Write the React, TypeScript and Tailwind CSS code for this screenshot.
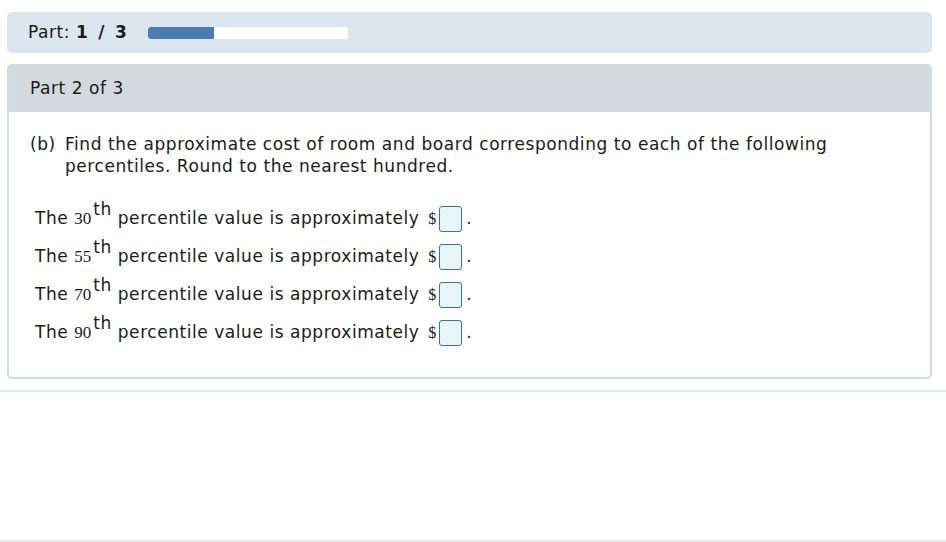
import React from "react";

const rows = ["30", "55", "70", "90"];

export default function App() {
  return (
    <div className="w-[946px] h-[542px] bg-white text-[17px] tracking-[0.55px] text-[#1a1a1a] overflow-hidden" style={{ fontFamily: '"DejaVu Sans", Verdana, sans-serif' }}>
      <div className="pt-[12px] pl-[7px] w-[932px]">
        <div className="h-[41px] bg-[#dce6ef] rounded-[5px] flex items-center pl-[21px]">
          <span>Part: <b className="tracking-[2.3px]">1 / 3</b></span>
          <div className="ml-[19px] w-[200px] h-[12px] bg-white rounded-[3px] overflow-hidden">
            <div className="w-[66px] h-full bg-[#4a7db4]"></div>
          </div>
        </div>
        <div className="mt-[11px] h-[315px] border-2 border-[#d3dbde] rounded-[5px] overflow-hidden">
          <div className="h-[46px] bg-[#d2dadd] flex items-center pl-[21px]">Part 2 of 3</div>
          <div className="pl-[21px] pt-[21px]">
            <div className="flex leading-[22px]">
              <span className="w-[35px] shrink-0">(b)</span>
              <span className="max-w-[795px]">Find the approximate cost of room and board corresponding to each of the following percentiles. Round to the nearest hundred.</span>
            </div>
            <div className="mt-[29px] pl-[5px] flex flex-col gap-[12px]">
              {rows.map((r) => (
                <div key={r} className="flex items-center h-[26px]">
                  <span>The&nbsp;</span>
                  <span className="text-[17px] tracking-normal" style={{ fontFamily: '"Liberation Serif", serif' }}>{r}</span>
                  <span className="relative -top-[9px] ml-[2px]">th</span>
                  <span className="ml-[6px]">percentile value is approximately</span>
                  <span className="ml-[9px] text-[16px] tracking-normal" style={{ fontFamily: '"Liberation Serif", serif' }}>$</span>
                  <span className="ml-[3px] w-[23px] h-[26px] border border-[#2b7b8e] bg-[#e8f4f8] rounded-[3px]"></span>
                  <span className="ml-[4px]">.</span>
                </div>
              ))}
            </div>
          </div>
        </div>
      </div>
      <div className="mt-[11px] h-[2px] bg-[#e2e8ea]"></div>
      <div className="mt-[148px] h-[2px] bg-[#e2e8ea]"></div>
    </div>
  );
}
